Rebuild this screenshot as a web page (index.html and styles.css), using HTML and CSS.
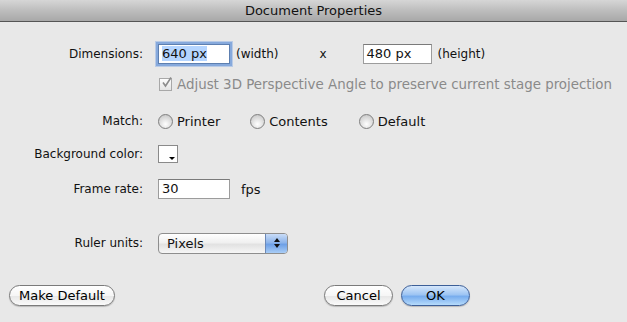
FILE: index.html
```html
<!DOCTYPE html>
<html lang="en">
<head>
  <meta charset="UTF-8" />
  <title>Document Properties</title>
  <link rel="stylesheet" href="styles.css">
</head>
<body>
  <div class="titlebar">Document Properties</div>

  <div class="form">
    <div class="row row-dims">
      <div class="label">Dimensions:</div>
      <div class="controls">
        <div class="field field-focus"><span class="sel">640 px</span></div>
        <span class="unit">(width)</span>
        <span class="times">x</span>
        <div class="field field-h">480 px</div>
        <span class="unit">(height)</span>
      </div>
    </div>

    <div class="row row-check">
      <div class="label"></div>
      <div class="controls disabled">
        <span class="checkbox">
          <svg width="14" height="13" viewBox="0 0 14 13"><path d="M3 6.5 L5.5 10 L11 1.5" fill="none" stroke="#8c8c8c" stroke-width="1.6"/></svg>
        </span>
        <span>Adjust 3D Perspective Angle to preserve current stage projection</span>
      </div>
    </div>

    <div class="row row-match">
      <div class="label">Match:</div>
      <div class="controls">
        <span class="radio"></span><span class="opt opt-1">Printer</span>
        <span class="radio"></span><span class="opt opt-2">Contents</span>
        <span class="radio"></span><span class="opt">Default</span>
      </div>
    </div>

    <div class="row row-bg">
      <div class="label">Background color:</div>
      <div class="controls">
        <span class="swatch"><span class="caret"></span></span>
      </div>
    </div>

    <div class="row row-fps">
      <div class="label">Frame rate:</div>
      <div class="controls">
        <div class="field">30</div>
        <span class="fps">fps</span>
      </div>
    </div>

    <div class="row row-ruler">
      <div class="label">Ruler units:</div>
      <div class="controls">
        <div class="select">
          <span class="select-text">Pixels</span>
          <span class="select-arrows">
            <svg width="8" height="12" viewBox="0 0 8 12"><path d="M4 1 L7 5 L1 5 Z M1 7 L7 7 L4 11 Z" fill="#111"/></svg>
          </span>
        </div>
      </div>
    </div>

    <div class="footer">
      <button class="btn">Make Default</button>
      <div class="footer-right">
        <button class="btn">Cancel</button>
        <button class="btn btn-default">OK</button>
      </div>
    </div>
  </div>
</body>
</html>
```

FILE: styles.css
```css
body {
  margin: 0;
  width: 627px;
  height: 322px;
  background-color: #e8e8e8;
  font-family: "DejaVu Sans", sans-serif;
  font-size: 12px;
  color: #111;
  overflow: hidden;
}

.titlebar {
  height: 21px;
  line-height: 21px;
  text-align: center;
  font-size: 13px;
  color: #111;
  background: linear-gradient(#d6d6d6, #bdbdbd 50%, #a8a8a8);
  border-bottom: 1px solid #555;
}

.form {
  padding-top: 20px;
}

.row {
  display: grid;
  grid-template-columns: 143px 1fr;
  column-gap: 15px;
  align-items: center;
}

.label {
  text-align: right;
}

.controls {
  display: flex;
  align-items: center;
}

.row-dims { height: 24px; }
.row-check { height: 18px; margin-top: 9px; }
.row-match { height: 20px; margin-top: 18px; }
.row-bg { height: 20px; margin-top: 13px; }
.row-fps { height: 24px; margin-top: 13px; }
.row-ruler { height: 22px; margin-top: 31px; }

.field {
  box-sizing: border-box;
  width: 72px;
  height: 20px;
  line-height: 18px;
  padding-left: 3px;
  font-size: 13px;
  background: #fff;
  border: 1px solid #9c9c9c;
  border-top-color: #7a7a7a;
}

.field-focus {
  border-color: #5d7fb0;
  box-shadow: 0 0 0 2px #86a9dc, 0 0 0 3px #b9cbe6;
}

.sel {
  background-color: #b5d5ff;
}

.field-h {
  width: 69px;
}

.unit {
  margin-left: 6px;
}

.times {
  margin-left: 41px;
  margin-right: 36px;
}

.disabled {
  color: #8a8a8a;
  font-size: 13.4px;
}

.checkbox {
  box-sizing: border-box;
  width: 13px;
  height: 13px;
  margin-left: 1px;
  margin-right: 5px;
  border: 1px solid #a8a8a8;
  background: linear-gradient(#fdfdfd, #e4e4e4);
  position: relative;
}

.checkbox svg {
  position: absolute;
  left: 0;
  top: -3px;
}

.radio {
  box-sizing: border-box;
  width: 15px;
  height: 15px;
  border-radius: 50%;
  border: 1px solid #7f7f7f;
  background: radial-gradient(circle at 50% 70%, #ffffff, #d2d2d2 70%, #b8b8b8);
  margin-right: 4px;
}

.opt {
  font-size: 13px;
}

.opt-1 { margin-right: 30px; }
.opt-2 { margin-right: 31px; }

.swatch {
  box-sizing: border-box;
  width: 20px;
  height: 18px;
  border: 1px solid #8a8a8a;
  background: #fff;
  position: relative;
}

.caret {
  position: absolute;
  right: 2px;
  bottom: 2px;
  width: 0;
  height: 0;
  border-left: 3px solid transparent;
  border-right: 3px solid transparent;
  border-top: 3px solid #000;
}

.fps {
  margin-left: 11px;
  font-size: 13px;
}

.select {
  box-sizing: border-box;
  width: 130px;
  height: 21px;
  display: flex;
  border: 1px solid #8e8e8e;
  border-radius: 4px;
  background: linear-gradient(#ffffff, #f0f0f0 45%, #e2e2e2 55%, #f6f6f6);
  overflow: hidden;
}

.select-text {
  flex: 1;
  line-height: 19px;
  padding-left: 8px;
  font-size: 13px;
}

.select-arrows {
  width: 21px;
  display: flex;
  align-items: center;
  justify-content: center;
  border-left: 1px solid #6b89b8;
  background: linear-gradient(#c9dcf7, #8db4ea 45%, #6ea0e6 55%, #a9cdf6);
}

.footer {
  display: flex;
  justify-content: space-between;
  padding: 0 157px 0 9px;
  margin-top: 31px;
}

.footer-right {
  display: flex;
  gap: 8px;
}

.btn {
  font-family: inherit;
  font-size: 13px;
  height: 21px;
  padding: 0;
  border: 1px solid #7a7a7a;
  border-radius: 11px;
  color: #000;
  background: linear-gradient(#ffffff, #f6f6f6 50%, #e8e8e8 55%, #fafafa);
  box-shadow: 0 1px 1px rgba(0, 0, 0, 0.2);
}

.footer > .btn { width: 106px; }
.footer-right .btn { width: 69px; }

.btn-default {
  border-color: #3d5f98;
  background: linear-gradient(#d6e7fb, #9ec5f3 45%, #78adee 55%, #b6dbfb);
}
```
